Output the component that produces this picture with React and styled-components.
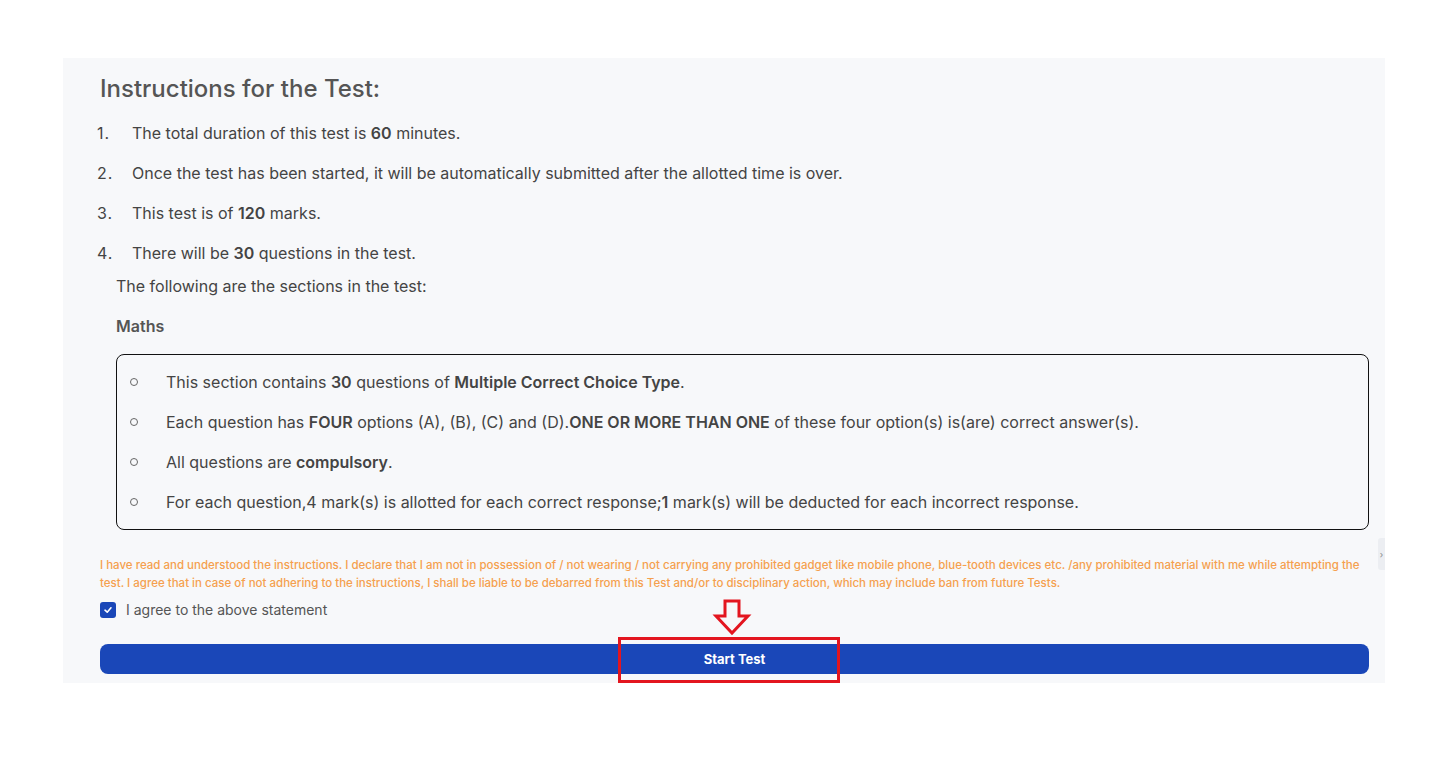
import React from "react";
import styled, { createGlobalStyle } from "styled-components";

const GlobalStyle = createGlobalStyle`
  body {
    margin: 0;
    background: #ffffff;
    font-family: Inter, "Noto Sans", sans-serif;
  }
  b {
    font-weight: 600;
  }
`;

const Page = styled.div`
  padding: 58px 47px 0 63px;
`;

const Panel = styled.div`
  position: relative;
  background-color: #f7f8fa;
  padding: 16px 16px 10px 37px;
  height: 625px;
  box-sizing: border-box;
`;

const Title = styled.h2`
  margin: 0 0 10px;
  font-size: 24px;
  font-weight: 500;
  color: #555;
`;

const NumList = styled.ol`
  margin: 0;
  padding: 0;
  list-style: none;
`;

const NumItem = styled.li`
  display: flex;
  height: 40px;
  align-items: center;
  font-size: 16px;
  color: #444;
`;

const Num = styled.span`
  width: 35px;
  margin-left: -3px;
  letter-spacing: 1px;
`;

const Sub = styled.div`
  margin-top: -7px;
  padding-left: 16px;
  color: #444;
  font-size: 16px;
`;

const Line = styled.p`
  margin: 0;
  height: 40px;
  display: flex;
  align-items: center;
  font-weight: ${(p) => (p.$bold ? 600 : 400)};
  color: ${(p) => (p.$bold ? "#555" : "#444")};
`;

const Box = styled.ul`
  list-style: none;
  margin: 8px 0 0;
  padding: 7px 0;
  border: 1px solid #111;
  border-radius: 8px;
`;

const BoxItem = styled.li`
  display: flex;
  align-items: center;
  height: 40px;
  padding-left: 13px;
  font-size: 16px;
  color: #444;
`;

const Bullet = styled.span`
  width: 6px;
  height: 6px;
  border: 1px solid #666;
  border-radius: 50%;
  margin-right: 28px;
`;

const Declaration = styled.p`
  margin: 26px 0 0;
  font-size: 11.5px;
  line-height: 18px;
  color: #f5a04e;
  font-weight: 500;
`;

const CheckRow = styled.label`
  display: flex;
  align-items: center;
  gap: 10px;
  margin-top: 9px;
  font-size: 14px;
  color: #555;
`;

const Check = styled.span`
  width: 16px;
  height: 16px;
  border-radius: 3px;
  background: #1a47b8;
  display: flex;
  align-items: center;
  justify-content: center;
`;

const StartButton = styled.button`
  display: block;
  width: 100%;
  height: 30px;
  margin-top: 26px;
  border: none;
  border-radius: 8px;
  background-color: #1a47b8;
  color: #fff;
  font-family: inherit;
  font-size: 13px;
  font-weight: 700;
`;

const Highlight = styled.div`
  position: absolute;
  left: 555px;
  top: 579px;
  width: 216px;
  height: 40px;
  border: 3px solid #e3151f;
`;

const Arrow = styled.svg`
  position: absolute;
  left: 649px;
  top: 541px;
`;

const SideTab = styled.div`
  position: absolute;
  right: 0;
  top: 480px;
  width: 7px;
  height: 32px;
  background: #eceef2;
  border-radius: 3px 0 0 3px;
  color: #888;
  font-size: 9px;
  display: flex;
  align-items: center;
  justify-content: center;
`;

const App = () => {
  return (
    <Page>
      <GlobalStyle />
      <Panel>
        <Title>Instructions for the Test:</Title>
        <NumList>
          <NumItem>
            <Num>1.</Num>
            <span>
              The total duration of this test is <b>60</b> minutes.
            </span>
          </NumItem>
          <NumItem>
            <Num>2.</Num>
            <span>
              Once the test has been started, it will be automatically submitted after the allotted time is over.
            </span>
          </NumItem>
          <NumItem>
            <Num>3.</Num>
            <span>
              This test is of <b>120</b> marks.
            </span>
          </NumItem>
          <NumItem>
            <Num>4.</Num>
            <span>
              There will be <b>30</b> questions in the test.
            </span>
          </NumItem>
        </NumList>
        <Sub>
          <Line>The following are the sections in the test:</Line>
          <Line $bold>Maths</Line>
          <Box>
            <BoxItem>
              <Bullet />
              <span>
                This section contains <b>30</b> questions of <b>Multiple Correct Choice Type</b>.
              </span>
            </BoxItem>
            <BoxItem>
              <Bullet />
              <span>
                Each question has <b>FOUR</b> options (A), (B), (C) and (D).<b>ONE OR MORE THAN ONE</b> of these four option(s) is(are) correct answer(s).
              </span>
            </BoxItem>
            <BoxItem>
              <Bullet />
              <span>
                All questions are <b>compulsory</b>.
              </span>
            </BoxItem>
            <BoxItem>
              <Bullet />
              <span>
                For each question,4 mark(s) is allotted for each correct response;<b>1</b> mark(s) will be deducted for each incorrect response.
              </span>
            </BoxItem>
          </Box>
        </Sub>
        <Declaration>
          I have read and understood the instructions. I declare that I am not in possession of / not wearing / not carrying any prohibited gadget like mobile phone, blue-tooth devices etc. /any prohibited material with me while attempting the test. I agree that in case of not adhering to the instructions, I shall be liable to be debarred from this Test and/or to disciplinary action, which may include ban from future Tests.
        </Declaration>
        <CheckRow>
          <Check>
            <svg width="10" height="10" viewBox="0 0 10 10">
              <path d="M2 5.2 L4.2 7.2 L8 2.8" stroke="#fff" strokeWidth="1.6" fill="none" strokeLinecap="round" strokeLinejoin="round" />
            </svg>
          </Check>
          I agree to the above statement
        </CheckRow>
        <StartButton>Start Test</StartButton>
        <SideTab>›</SideTab>
        <Arrow width="40" height="38" viewBox="0 0 40 38">
          <path d="M13 2 H27 V17 H36 L20 34 L4 17 H13 Z" fill="none" stroke="#e3151f" strokeWidth="3" strokeLinejoin="miter" />
        </Arrow>
        <Highlight />
      </Panel>
    </Page>
  );
};

export default App;
